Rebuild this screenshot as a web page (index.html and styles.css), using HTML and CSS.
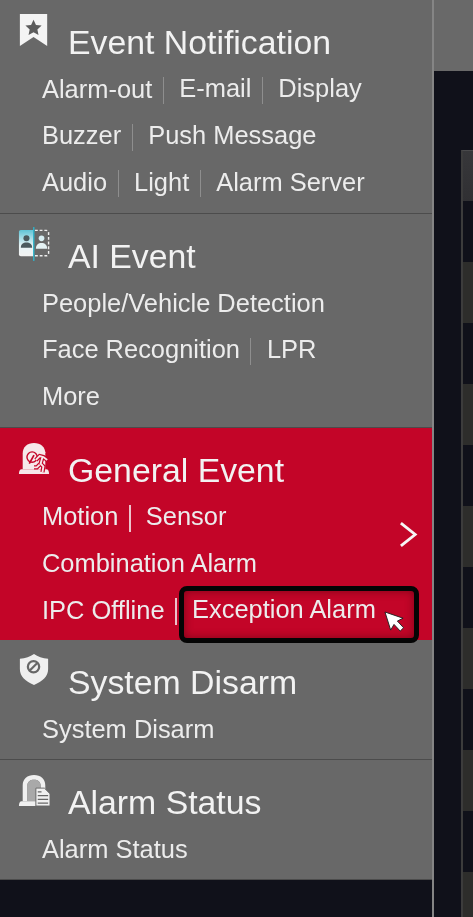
FILE: index.html
```html
<!DOCTYPE html>
<html lang="en-US">
  <head>
    <title>Event</title>
    <meta charset="utf-8">
    <link rel="stylesheet" href="styles.css">
  </head>
  <body>
    <nav class="sidebar">
      <section class="group">
        <div class="group-head">
          <svg class="icon" viewBox="0 0 34 36"><path fill="#f4f4f4" d="M2 1h29v34l-14.500-9.500L2 35z"/><path fill="#5c5c5c" d="M16.500 7l2.600 5.600 6 .7-4.500 4.100 1.200 6-5.300-3-5.300 3 1.200-6-4.500-4.100 6-.7z"/></svg>
          <h2>Event Notification</h2>
        </div>
        <div class="row"><a>Alarm-out</a><a>E-mail</a><a>Display</a></div>
        <div class="row"><a>Buzzer</a><a>Push Message</a></div>
        <div class="row"><a>Audio</a><a>Light</a><a>Alarm Server</a></div>
      </section>
      <section class="group">
        <div class="group-head">
          <svg class="icon" viewBox="0 0 34 36">
            <defs><linearGradient id="ai" x1="0" y1="0" x2="0" y2="1"><stop offset="0" stop-color="#5fc4d6"/><stop offset=".6" stop-color="#e8f4f6"/><stop offset="1" stop-color="#f2f2f2"/></linearGradient></defs>
            <path fill="url(#ai)" d="M3 3h14v28H3a2 2 0 0 1-2-2V5a2 2 0 0 1 2-2z"/>
            <path fill="none" stroke="#eee" stroke-width="1.500" stroke-dasharray="3 2" d="M18 3.500h12a2.500 2.500 0 0 1 2.500 2.500v22a2.500 2.500 0 0 1-2.500 2.500H18"/>
            <circle cx="9" cy="12" r="3.200" fill="#4c5a5e"/><path fill="#4c5a5e" d="M3 22c0-4 2.500-5.500 6-5.500s6 1.500 6 5.500z"/>
            <circle cx="25" cy="12" r="3" fill="#d8eef2"/><path fill="#e4f2f4" d="M19 23c0-4 2.500-6 6-6s6 2 6 6z"/>
            <rect x="16" y="0" width="1.500" height="36" fill="#2fb2c8"/>
          </svg>
          <h2>AI Event</h2>
        </div>
        <div class="row"><a>People/Vehicle Detection</a></div>
        <div class="row"><a>Face Recognition</a><a>LPR</a></div>
        <div class="row"><a>More</a></div>
      </section>
      <section class="group active">
        <div class="group-head">
          <svg class="icon" viewBox="0 0 34 36">
            <path fill="#f6e8ea" d="M5 30V13C5 6 10 2 17 2s12 4 12 11v17z"/>
            <path fill="#f6e8ea" d="M1 35c0-3 1-5 3-5h26c2 0 3 2 3 5z"/>
            <circle cx="15" cy="17" r="5.500" fill="none" stroke="#c40528" stroke-width="1.500"/>
            <path stroke="#c40528" stroke-width="1.800" d="M12 24l5-9"/>
            <path fill="none" stroke="#c40528" stroke-width="4.500" d="M19 20l4-4 4 1 4 3M26 17l-2 7 3 3-1 6M23 25l-3 3-3 0"/>
            <circle cx="27" cy="12" r="2" fill="#f6e8ea"/>
            <path fill="none" stroke="#f6e8ea" stroke-width="2" d="M19 20l4-4 4 1 4 3M26 17l-2 7 3 3-1 6M23 25l-3 3-3 0"/>
          </svg>
          <h2>General Event</h2>
        </div>
        <div class="row"><a>Motion</a><a>Sensor</a></div>
        <div class="row"><a>Combination Alarm</a></div>
        <div class="row"><a>IPC Offline</a><a class="focused">Exception Alarm</a></div>
        <svg class="chevron" viewBox="0 0 20 28"><path fill="none" stroke="#f6f6f6" stroke-width="3" d="M2 2l15 12L2 26"/></svg>
        <svg class="cursor" viewBox="0 0 22 24"><path fill="#fff" stroke="#222" stroke-width="1" d="M1 1l6 19 3.500-6 6.500 7 3.500-3.500-6.500-7 6-3z"/></svg>
      </section>
      <section class="group single">
        <div class="group-head">
          <svg class="icon" viewBox="0 0 34 36"><path fill="#efefef" d="M17 1c4 3 9 4.500 15 5v11c0 8-6 13-15 17C8 30 2 25 2 17V6c6-.5 11-2 15-5z"/><circle cx="16.500" cy="14.500" r="6" fill="none" stroke="#676767" stroke-width="2.400"/><path stroke="#676767" stroke-width="2.400" d="M12.500 18.500l8-8"/></svg>
          <h2>System Disarm</h2>
        </div>
        <div class="row"><a>System Disarm</a></div>
      </section>
      <section class="group single">
        <div class="group-head">
          <svg class="icon" viewBox="0 0 34 36">
            <path fill="#f0f0f0" d="M5 30V13C5 6 10 2 17 2s12 4 12 11v4h-5v-4c0-4-3-6-7-6s-7 2-7 6v17z"/>
            <path fill="#a9a9a9" d="M10 30V13c0-4 3-6 7-6s7 2 7 6v4h-5v13z"/>
            <path fill="#f0f0f0" d="M1 35c0-3 1-5 3-5h15v5z"/>
            <path fill="#f0f0f0" stroke="#676767" d="M19 16h9l6 6v13H19z"/>
            <path stroke="#676767" stroke-width="1.300" d="M21 24h11M21 28h11M21 32h11M21 20h4"/>
          </svg>
          <h2>Alarm Status</h2>
        </div>
        <div class="row"><a>Alarm Status</a></div>
      </section>
    </nav>
    <main class="content">
      <div class="top-bar"></div>
      <div class="stage">
        <div class="table">
          <div class="table-head"></div>
          <div class="table-row"></div>
          <div class="table-row odd"></div>
          <div class="table-row"></div>
          <div class="table-row odd"></div>
          <div class="table-row"></div>
          <div class="table-row odd"></div>
          <div class="table-row"></div>
          <div class="table-row odd"></div>
          <div class="table-row"></div>
          <div class="table-row odd"></div>
          <div class="table-row"></div>
          <div class="table-row odd"></div>
        </div>
      </div>
    </main>
  </body>
</html>
```

FILE: styles.css
```css
html, body {
  margin: 0;
  height: 917px;
  overflow: hidden;
}
body {
  display: flex;
  background-color: #10111a;
  font-family: "Liberation Sans", Arial, sans-serif;
  color: #ececec;
}
.sidebar {
  width: 432px;
  flex: none;
  border-right: 2px solid #858585;
}
.group {
  position: relative;
  box-sizing: border-box;
  padding: 14px 0 7px 18px;
  background-color: #686868;
  border-bottom: 1px solid #4c4c4c;
  filter: blur(.5px);
}
.group.single {
  padding-bottom: 6px;
}
.group.active {
  z-index: 1;
  background-color: #c30528;
  border-bottom: 0;
}
.group-head {
  display: flex;
  align-items: flex-start;
  height: 52px;
}
.icon {
  width: 32px;
  height: 34px;
  flex: none;
  margin-top: -1px;
}
h2 {
  margin: 9px 0 0 18px;
  font-size: 33.800px;
  line-height: 38px;
  font-weight: 400;
  color: #f2f2f2;
}
.row {
  display: flex;
  align-items: center;
  height: 46.600px;
  padding-left: 24px;
  font-size: 25.450px;
  white-space: nowrap;
}
.row a + a::before {
  content: "";
  display: inline-block;
  width: 1px;
  height: 27px;
  margin: 0 15.500px 0 10.500px;
  background-color: #8e8e8e;
  vertical-align: middle;
}
.active .row a + a::before {
  width: 2px;
  margin-right: 15px;
  background-color: #ecc4cc;
}
.focused {
  position: relative;
}
.focused::after {
  content: "";
  position: absolute;
  left: 14px;
  top: -9px;
  width: 230px;
  height: 47px;
  border: 5px solid #050505;
  border-radius: 8px;
  box-shadow: inset 0 0 8px rgba(60, 0, 10, .5);
}
.chevron {
  position: absolute;
  left: 399px;
  top: 93px;
  width: 19px;
  height: 27px;
}
.cursor {
  position: absolute;
  left: 384px;
  top: 183px;
  width: 21px;
  height: 23px;
}
.content {
  flex: 1;
  min-width: 0;
}
.top-bar {
  height: 71px;
  background-color: #696969;
}
.stage {
  padding: 79px 0 0 27px;
}
.table {
  border-left: 2px solid #3c3c3c;
  border-top: 1px solid #4a4a4c;
}
.table-head {
  height: 50px;
  background-image: linear-gradient(#37373a, #303033);
}
.table-row {
  height: 61px;
  background-color: #10111a;
}
.table-row.odd {
  background-color: #2d2d2b;
}
```
